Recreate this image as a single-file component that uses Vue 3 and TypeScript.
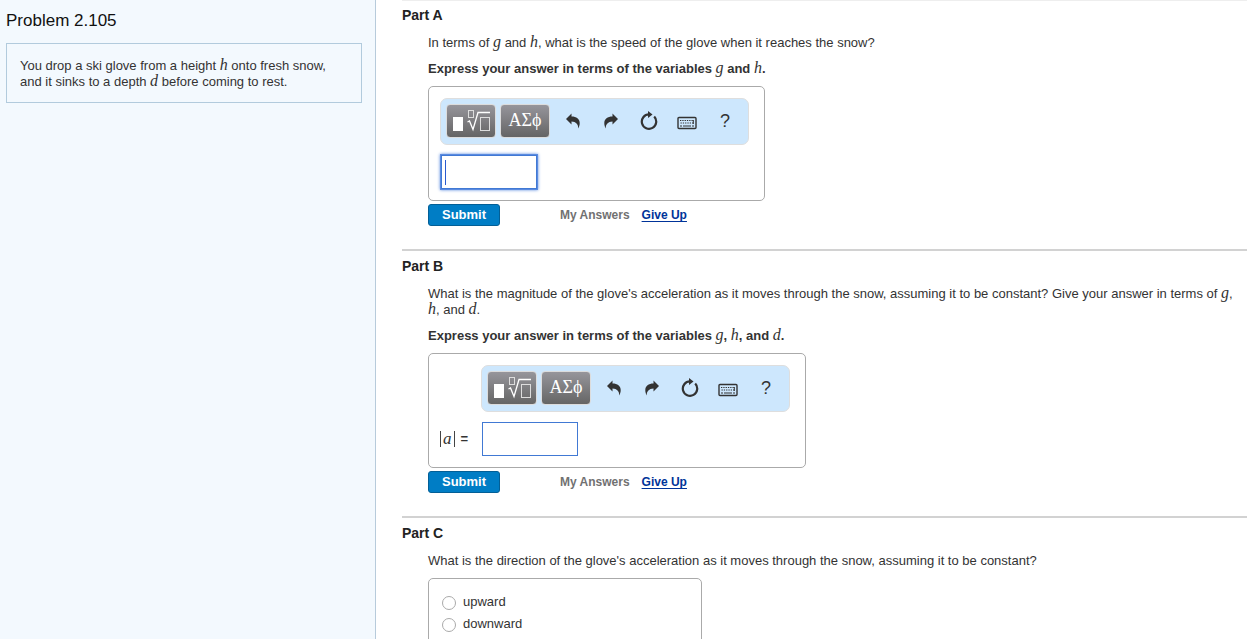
<script setup lang="ts">
import { ref } from 'vue'

interface Piece {
  text: string
  math?: boolean
}

interface Part {
  id: string
  title: string
  question: Piece[]
  hint?: Piece[]
  label?: boolean
  active?: boolean
  options?: string[]
}

const t = (text: string): Piece => ({ text })
const m = (text: string): Piece => ({ text, math: true })

const parts: Part[] = [
  {
    id: 'a',
    title: 'Part A',
    question: [t('In terms of '), m('g'), t(' and '), m('h'), t(', what is the speed of the glove when it reaches the snow?')],
    hint: [t('Express your answer in terms of the variables '), m('g'), t(' and '), m('h'), t('.')],
    active: true,
  },
  {
    id: 'b',
    title: 'Part B',
    question: [
      t("What is the magnitude of the glove's acceleration as it moves through the snow, assuming it to be constant? Give your answer in terms of "),
      m('g'), t(', '), m('h'), t(', and '), m('d'), t('.'),
    ],
    hint: [t('Express your answer in terms of the variables '), m('g'), t(', '), m('h'), t(', and '), m('d'), t('.')],
    label: true,
  },
  {
    id: 'c',
    title: 'Part C',
    question: [t("What is the direction of the glove's acceleration as it moves through the snow, assuming it to be constant?")],
    options: ['upward', 'downward'],
  },
]

const answers = ref<Record<string, string>>({ a: '', b: '' })
const direction = ref('')
</script>

<template>
  <div class="page">
    <aside class="side">
      <h1>Problem 2.105</h1>
      <p class="statement">
        You drop a ski glove from a height <i class="math">h</i> onto fresh snow, and it sinks to a depth
        <i class="math">d</i> before coming to rest.
      </p>
    </aside>

    <main class="main">
      <section v-for="part in parts" :key="part.id" class="part">
        <h2>{{ part.title }}</h2>
        <div class="body">
          <p class="question">
            <template v-for="(p, i) in part.question" :key="i"><i v-if="p.math" class="math">{{ p.text }}</i><template v-else>{{ p.text }}</template></template>
          </p>

          <template v-if="part.hint">
            <p class="hint">
              <template v-for="(p, i) in part.hint" :key="i"><i v-if="p.math" class="math">{{ p.text }}</i><template v-else>{{ p.text }}</template></template>
            </p>
            <div class="answer" :class="{ labelled: part.label }">
              <div class="toolbar">
                <button type="button" class="key" aria-label="Templates">
                  <svg width="48" height="32" viewBox="0 0 48 32" fill="none" stroke="#fff">
                    <rect x="6" y="12" width="10" height="14" fill="#fff" stroke="none" />
                    <rect x="21.500" y="5.500" width="5" height="7" stroke="#ddd" />
                    <path d="M20.500 17l2-1 3.500 8.500 5-17H43" stroke-width="1.300" />
                    <rect x="33.500" y="12.500" width="9" height="13" stroke="#ddd" />
                  </svg>
                </button>
                <button type="button" class="key greek">ΑΣϕ</button>
                <div class="tools">
                  <button type="button" class="tool" aria-label="Undo">
                    <svg width="16" height="18" viewBox="0 0 16 18" fill="#333">
                      <path d="M1 7L6.500 1.500V4.500c5 0 8.200 2.500 8.200 6.500 0 2-.5 3.700-1.400 5.500C13.300 12 11 9.800 6.500 9.500V12.500z" />
                    </svg>
                  </button>
                  <button type="button" class="tool" aria-label="Redo">
                    <svg width="16" height="18" viewBox="0 0 16 18" fill="#333">
                      <path d="M15 7L9.500 1.500V4.500c-5 0-8.200 2.500-8.200 6.500 0 2 .5 3.700 1.400 5.500C2.700 12 5 9.800 9.500 9.500V12.500z" />
                    </svg>
                  </button>
                  <button type="button" class="tool" aria-label="Reset">
                    <svg width="18" height="20" viewBox="0 0 18 20">
                      <path d="M14.200 5.600a7.200 7.200 0 1 1-5.200-2.200" fill="none" stroke="#333" stroke-width="2.200" />
                      <path d="M8 0l4.500 3.500L8 7z" fill="#333" />
                    </svg>
                  </button>
                  <button type="button" class="tool low" aria-label="Keyboard shortcuts">
                    <svg width="20" height="14" viewBox="0 0 20 14" fill="none" stroke="#333">
                      <rect x="1" y="1.500" width="18" height="11" rx="1" stroke-width="1.400" />
                      <path d="M3 4.500h14M3.500 7h13" stroke-width="1.200" stroke-dasharray="1.300 1" />
                      <path d="M3 10h2M6 10h8M15 10h2" stroke-width="1.200" />
                      <path d="M16.300 4v4" />
                    </svg>
                  </button>
                  <button type="button" class="tool help" aria-label="Help">?</button>
                </div>
              </div>
              <label v-if="part.label" class="name" :for="'answer-' + part.id"><span class="bar"></span><i>a</i><span class="bar"></span><b>=</b></label>
              <div class="field" :class="{ active: part.active }">
                <input :id="'answer-' + part.id" v-model="answers[part.id]" type="text" :aria-label="part.title + ' answer'" />
              </div>
            </div>
            <div class="actions">
              <button type="button" class="submit">Submit</button>
              <span class="mine">My Answers</span>
              <a href="#">Give Up</a>
            </div>
          </template>

          <div v-if="part.options" class="choices">
            <label v-for="o in part.options" :key="o">
              <input v-model="direction" type="radio" name="direction" :value="o" />{{ o }}
            </label>
          </div>
        </div>
      </section>
    </main>
  </div>
</template>

<style>
body {
  background: #fff;
  overflow: hidden;
}
</style>

<style scoped>
.page {
  display: grid;
  grid-template-columns: 376px minmax(0, 1fr);
  height: 100vh;
  overflow: hidden;
  font: 13px/16px "Liberation Sans", Arial, sans-serif;
  color: #333;
}
.page * {
  box-sizing: border-box;
}
.side {
  background: #f3f9fe;
  border-right: 1px solid #b7cbdb;
  padding: 11px 13px 0 6px;
}
h1,
h2,
p {
  margin: 0;
}
h1 {
  font-size: 17px;
  line-height: 20px;
  font-weight: 400;
  color: #111;
}
.statement {
  margin-top: 12px;
  padding: 14px 13px 12px;
  border: 1px solid #b2cbdd;
}
.math {
  font: italic 16px/10px "Liberation Serif", "Times New Roman", serif;
}
.main {
  padding: 0 3px 0 26px;
}
.part {
  border-top: 2px solid #d2d2d2;
  padding: 7px 0 23px;
}
.part:first-child {
  border-top: 1px solid #eee;
  padding-top: 6px;
}
h2 {
  font-size: 14px;
  line-height: 16px;
  font-weight: 700;
  color: #222;
}
.body {
  padding: 12px 0 0 26px;
}
.hint {
  margin-top: 10px;
  font-weight: 700;
}
.answer {
  display: grid;
  grid-template-columns: auto;
  row-gap: 10px;
  width: fit-content;
  margin-top: 9px;
  padding: 11px 15px 11px 11px;
  border: 1px solid #aaa;
  border-radius: 5px;
}
.answer.labelled {
  grid-template-columns: 41px auto;
}
.labelled .toolbar {
  grid-column: 2;
}
.toolbar {
  display: flex;
  align-items: center;
  gap: 4px;
  height: 47px;
  padding: 0 4px 1px 5px;
  background: #cde7fd;
  border: 1px solid #dedede;
  border-radius: 7px;
}
button {
  padding: 0;
  border: 0;
  background: none;
  font-family: inherit;
}
.key {
  display: flex;
  align-items: center;
  justify-content: center;
  width: 50px;
  height: 34px;
  border: 1px solid #dcdcdc;
  border-radius: 4px;
  background: linear-gradient(#96959b, #656565);
  color: #fff;
  font: 18px/24px "Liberation Serif", "Times New Roman", serif;
}
.greek {
  padding-bottom: 2px;
}
.key svg {
  flex: none;
}
.tools {
  display: flex;
}
.tool {
  display: flex;
  align-items: center;
  justify-content: center;
  width: 38px;
  height: 34px;
}
.low {
  padding-top: 4px;
}
.help {
  color: #333;
  font: 18px/20px "Liberation Sans", Arial, sans-serif;
}
.name {
  display: flex;
  align-items: center;
}
.name i {
  margin: 0 2px;
  font: italic 17px/16px "Liberation Serif", "Times New Roman", serif;
}
.name b {
  margin-left: 6px;
}
.bar {
  width: 1px;
  height: 16px;
  background: #444;
}
.field {
  position: relative;
  width: 96px;
  margin-left: 1px;
}
.field input {
  display: block;
  width: 100%;
  height: 34px;
  padding: 0 4px;
  border: 1px solid #4179d4;
  outline: none;
  background: #fff;
  font: inherit;
}
.field.active input {
  box-shadow: 0 0 0 1px #5b8be0, 0 0 3px 1px #5b8be0;
}
.field.active::after {
  content: "";
  position: absolute;
  left: 4px;
  top: 5px;
  width: 1px;
  height: 25px;
  background: #2a5bd0;
}
.actions {
  display: flex;
  align-items: center;
  margin-top: 3px;
  font-size: 12px;
  font-weight: 700;
}
.submit {
  width: 72px;
  height: 22px;
  border: 1px solid #035f96;
  border-radius: 3px;
  background: #007dc5;
  color: #fff;
  font-size: 13px;
  line-height: 18px;
  font-weight: 700;
}
.mine {
  margin: 0 12px 0 60px;
  color: #717171;
}
a {
  color: #003399;
  text-underline-offset: 2px;
}
.choices {
  display: grid;
  width: 274px;
  margin-top: 9px;
  padding: 12px 13px 20px;
  border: 1px solid #aaa;
  border-radius: 5px;
}
.choices label {
  display: flex;
  align-items: center;
  gap: 7px;
  height: 22px;
}
.choices input {
  appearance: none;
  width: 14px;
  height: 14px;
  margin: 2px 0 0;
  border: 1px solid #aaa;
  border-radius: 50%;
  background: #fff;
}
.choices input:checked {
  border: 4px solid #4179d4;
}
</style>
